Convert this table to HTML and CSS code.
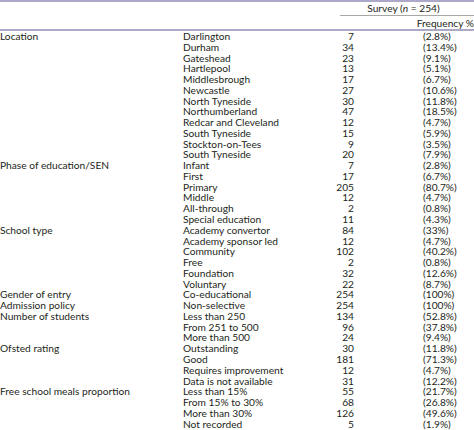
FILE: index.html
```html
<!DOCTYPE html>
<html>
<head>
<meta charset="utf-8">
<link rel="stylesheet" href="styles.css">
</head>
<body>
<div class="tbl">
  <div class="rule-top"></div>
  <div class="head1"><div class="survey">Survey (<i>n</i> = 254)</div></div>
  <div class="head2"><div class="freq">Frequency %</div></div>
  <div class="rule-mid"></div>
  <div class="rows">
    <div class="row"><span class="c1">Location</span><span class="c2">Darlington</span><span class="c3">7</span><span class="c4">(2.8%)</span></div>
    <div class="row"><span class="c1"></span><span class="c2">Durham</span><span class="c3">34</span><span class="c4">(13.4%)</span></div>
    <div class="row"><span class="c1"></span><span class="c2">Gateshead</span><span class="c3">23</span><span class="c4">(9.1%)</span></div>
    <div class="row"><span class="c1"></span><span class="c2">Hartlepool</span><span class="c3">13</span><span class="c4">(5.1%)</span></div>
    <div class="row"><span class="c1"></span><span class="c2">Middlesbrough</span><span class="c3">17</span><span class="c4">(6.7%)</span></div>
    <div class="row"><span class="c1"></span><span class="c2">Newcastle</span><span class="c3">27</span><span class="c4">(10.6%)</span></div>
    <div class="row"><span class="c1"></span><span class="c2">North Tyneside</span><span class="c3">30</span><span class="c4">(11.8%)</span></div>
    <div class="row"><span class="c1"></span><span class="c2">Northumberland</span><span class="c3">47</span><span class="c4">(18.5%)</span></div>
    <div class="row"><span class="c1"></span><span class="c2">Redcar and Cleveland</span><span class="c3">12</span><span class="c4">(4.7%)</span></div>
    <div class="row"><span class="c1"></span><span class="c2">South Tyneside</span><span class="c3">15</span><span class="c4">(5.9%)</span></div>
    <div class="row"><span class="c1"></span><span class="c2">Stockton-on-Tees</span><span class="c3">9</span><span class="c4">(3.5%)</span></div>
    <div class="row"><span class="c1"></span><span class="c2">South Tyneside</span><span class="c3">20</span><span class="c4">(7.9%)</span></div>
    <div class="row"><span class="c1">Phase of education/SEN</span><span class="c2">Infant</span><span class="c3">7</span><span class="c4">(2.8%)</span></div>
    <div class="row"><span class="c1"></span><span class="c2">First</span><span class="c3">17</span><span class="c4">(6.7%)</span></div>
    <div class="row"><span class="c1"></span><span class="c2">Primary</span><span class="c3">205</span><span class="c4">(80.7%)</span></div>
    <div class="row"><span class="c1"></span><span class="c2">Middle</span><span class="c3">12</span><span class="c4">(4.7%)</span></div>
    <div class="row"><span class="c1"></span><span class="c2">All-through</span><span class="c3">2</span><span class="c4">(0.8%)</span></div>
    <div class="row"><span class="c1"></span><span class="c2">Special education</span><span class="c3">11</span><span class="c4">(4.3%)</span></div>
    <div class="row"><span class="c1">School type</span><span class="c2">Academy convertor</span><span class="c3">84</span><span class="c4">(33%)</span></div>
    <div class="row"><span class="c1"></span><span class="c2">Academy sponsor led</span><span class="c3">12</span><span class="c4">(4.7%)</span></div>
    <div class="row"><span class="c1"></span><span class="c2">Community</span><span class="c3">102</span><span class="c4">(40.2%)</span></div>
    <div class="row"><span class="c1"></span><span class="c2">Free</span><span class="c3">2</span><span class="c4">(0.8%)</span></div>
    <div class="row"><span class="c1"></span><span class="c2">Foundation</span><span class="c3">32</span><span class="c4">(12.6%)</span></div>
    <div class="row"><span class="c1"></span><span class="c2">Voluntary</span><span class="c3">22</span><span class="c4">(8.7%)</span></div>
    <div class="row"><span class="c1">Gender of entry</span><span class="c2">Co-educational</span><span class="c3">254</span><span class="c4">(100%)</span></div>
    <div class="row"><span class="c1">Admission policy</span><span class="c2">Non-selective</span><span class="c3">254</span><span class="c4">(100%)</span></div>
    <div class="row"><span class="c1">Number of students</span><span class="c2">Less than 250</span><span class="c3">134</span><span class="c4">(52.8%)</span></div>
    <div class="row"><span class="c1"></span><span class="c2">From 251 to 500</span><span class="c3">96</span><span class="c4">(37.8%)</span></div>
    <div class="row"><span class="c1"></span><span class="c2">More than 500</span><span class="c3">24</span><span class="c4">(9.4%)</span></div>
    <div class="row"><span class="c1">Ofsted rating</span><span class="c2">Outstanding</span><span class="c3">30</span><span class="c4">(11.8%)</span></div>
    <div class="row"><span class="c1"></span><span class="c2">Good</span><span class="c3">181</span><span class="c4">(71.3%)</span></div>
    <div class="row"><span class="c1"></span><span class="c2">Requires improvement</span><span class="c3">12</span><span class="c4">(4.7%)</span></div>
    <div class="row"><span class="c1"></span><span class="c2">Data is not available</span><span class="c3">31</span><span class="c4">(12.2%)</span></div>
    <div class="row"><span class="c1">Free school meals proportion</span><span class="c2">Less than 15%</span><span class="c3">55</span><span class="c4">(21.7%)</span></div>
    <div class="row"><span class="c1"></span><span class="c2">From 15% to 30%</span><span class="c3">68</span><span class="c4">(26.8%)</span></div>
    <div class="row"><span class="c1"></span><span class="c2">More than 30%</span><span class="c3">126</span><span class="c4">(49.6%)</span></div>
    <div class="row"><span class="c1"></span><span class="c2">Not recorded</span><span class="c3">5</span><span class="c4">(1.9%)</span></div>
  </div>
</div>
</body>
</html>
```

FILE: styles.css
```css
html, body {
  margin: 0;
  padding: 0;
  background: #ffffff;
}
body {
  font-family: "Lato", "Liberation Sans", sans-serif;
  font-size: 10.2px;
  color: #231f20;
}
.tbl {
  width: 474px;
}
.rule-top {
  height: 2px;
  background: #aba8c8;
}
.head1 {
  display: flex;
  justify-content: flex-end;
}
.survey {
  width: 134px;
  height: 13px;
  line-height: 13px;
  text-align: center;
  border-bottom: 1px solid #a7a7a7;
  padding-right: 7px;
  box-sizing: content-box;
  width: 127px;
}
.survey i {
  font-style: italic;
}
.head2 {
  display: flex;
  justify-content: flex-end;
  height: 13px;
  line-height: 14px;
}
.rule-mid {
  height: 2px;
  background: #aba8c8;
}
.row {
  display: grid;
  grid-template-columns: 183px 1fr 40px 120px;
  height: 10.78px;
  line-height: 10.78px;
  white-space: nowrap;
}
.c3 {
  text-align: right;
}
.c4 {
  padding-left: 69px;
}
```
